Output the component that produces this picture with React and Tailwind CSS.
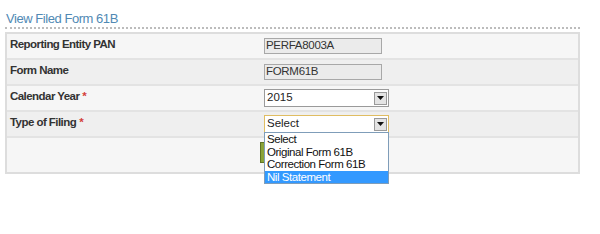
const rows = [
  { label: 'Reporting Entity PAN', kind: 'input', value: 'PERFA8003A', bg: 'bg-[#f6f6f6]' },
  { label: 'Form Name', kind: 'input', value: 'FORM61B', bg: 'bg-[#efefef]' },
  { label: 'Calendar Year', required: true, kind: 'select', value: '2015', bg: 'bg-[#f6f6f6]' },
  { label: 'Type of Filing', required: true, kind: 'open', value: 'Select', bg: 'bg-[#efefef]' },
]

const options = ['Select', 'Original Form 61B', 'Correction Form 61B', 'Nil Statement']

function Arrow() {
  return (
    <div className="w-[13px] h-[13px] mr-[1px] bg-[#e4e4e4] border border-[#9a9a9a] flex items-center justify-center">
      <svg width="7" height="4" viewBox="0 0 7 4">
        <path d="M0 0h7L3.5 4z" fill="#111" />
      </svg>
    </div>
  )
}

function Field({ row }) {
  if (row.kind === 'input') {
    return (
      <div className="w-[118px] h-[16px] bg-[#ebebeb] border border-[#a8a8a8] flex items-center pl-[1px] text-[11.5px] tracking-[-0.3px] text-[#333]">
        {row.value}
      </div>
    )
  }
  if (row.kind === 'select') {
    return (
      <div className="w-[125px] h-[18px] bg-white border border-[#9a9a9a] flex items-center justify-between pl-[2px] text-[11.5px] text-[#222]">
        <span>{row.value}</span>
        <Arrow />
      </div>
    )
  }
  return (
    <div className="relative">
      <div className="w-[125px] h-[18px] bg-white border border-[#e0bd62] flex items-center justify-between pl-[2px] text-[11.5px] text-[#222]">
        <span>{row.value}</span>
        <Arrow />
      </div>
      <div className="absolute left-0 top-[17px] w-[125px] bg-white border border-[#7f9db9] z-10 text-[11.5px] tracking-[-0.45px] leading-[12.5px] text-[#111]">
        {options.map((o) => (
          <div
            key={o}
            className={o === 'Nil Statement' ? 'bg-[#3399ff] text-white pl-[2px]' : 'pl-[2px]'}
          >
            {o}
          </div>
        ))}
      </div>
    </div>
  )
}

export default function App() {
  return (
    <div className="w-[600px] h-[234px] bg-white font-['Liberation_Sans',Arial,sans-serif]">
      <div className="pt-[12px] ml-[5px] w-[575px]">
        <div className="pl-[1px] pb-[1px] text-[13px] leading-[14px] tracking-[-0.45px] text-[#5089b4] border-b-2 border-dotted border-[#bcbcbc]">
          View Filed Form 61B
        </div>
        <div className="mt-[3px] border-2 border-[#dddddd]">
          {rows.map((row) => (
            <div key={row.label} className={`flex items-center h-[26px] border-b-2 border-[#e3e3e3] ${row.bg}`}>
              <div className="w-[257px] pl-[3px] text-[11.5px] tracking-[-0.55px] font-bold text-[#333] -mt-[2px]">
                {row.label}
                {row.required && <span className="text-[#d43f3a] ml-[3px]">*</span>}
              </div>
              <Field row={row} />
            </div>
          ))}
          <div className="h-[34px] bg-[#f6f6f6] pl-[253px] pt-[4px]">
            <div className="w-[60px] h-[21px] bg-[#8aa339] border border-[#5f7424]" />
          </div>
        </div>
      </div>
    </div>
  )
}
